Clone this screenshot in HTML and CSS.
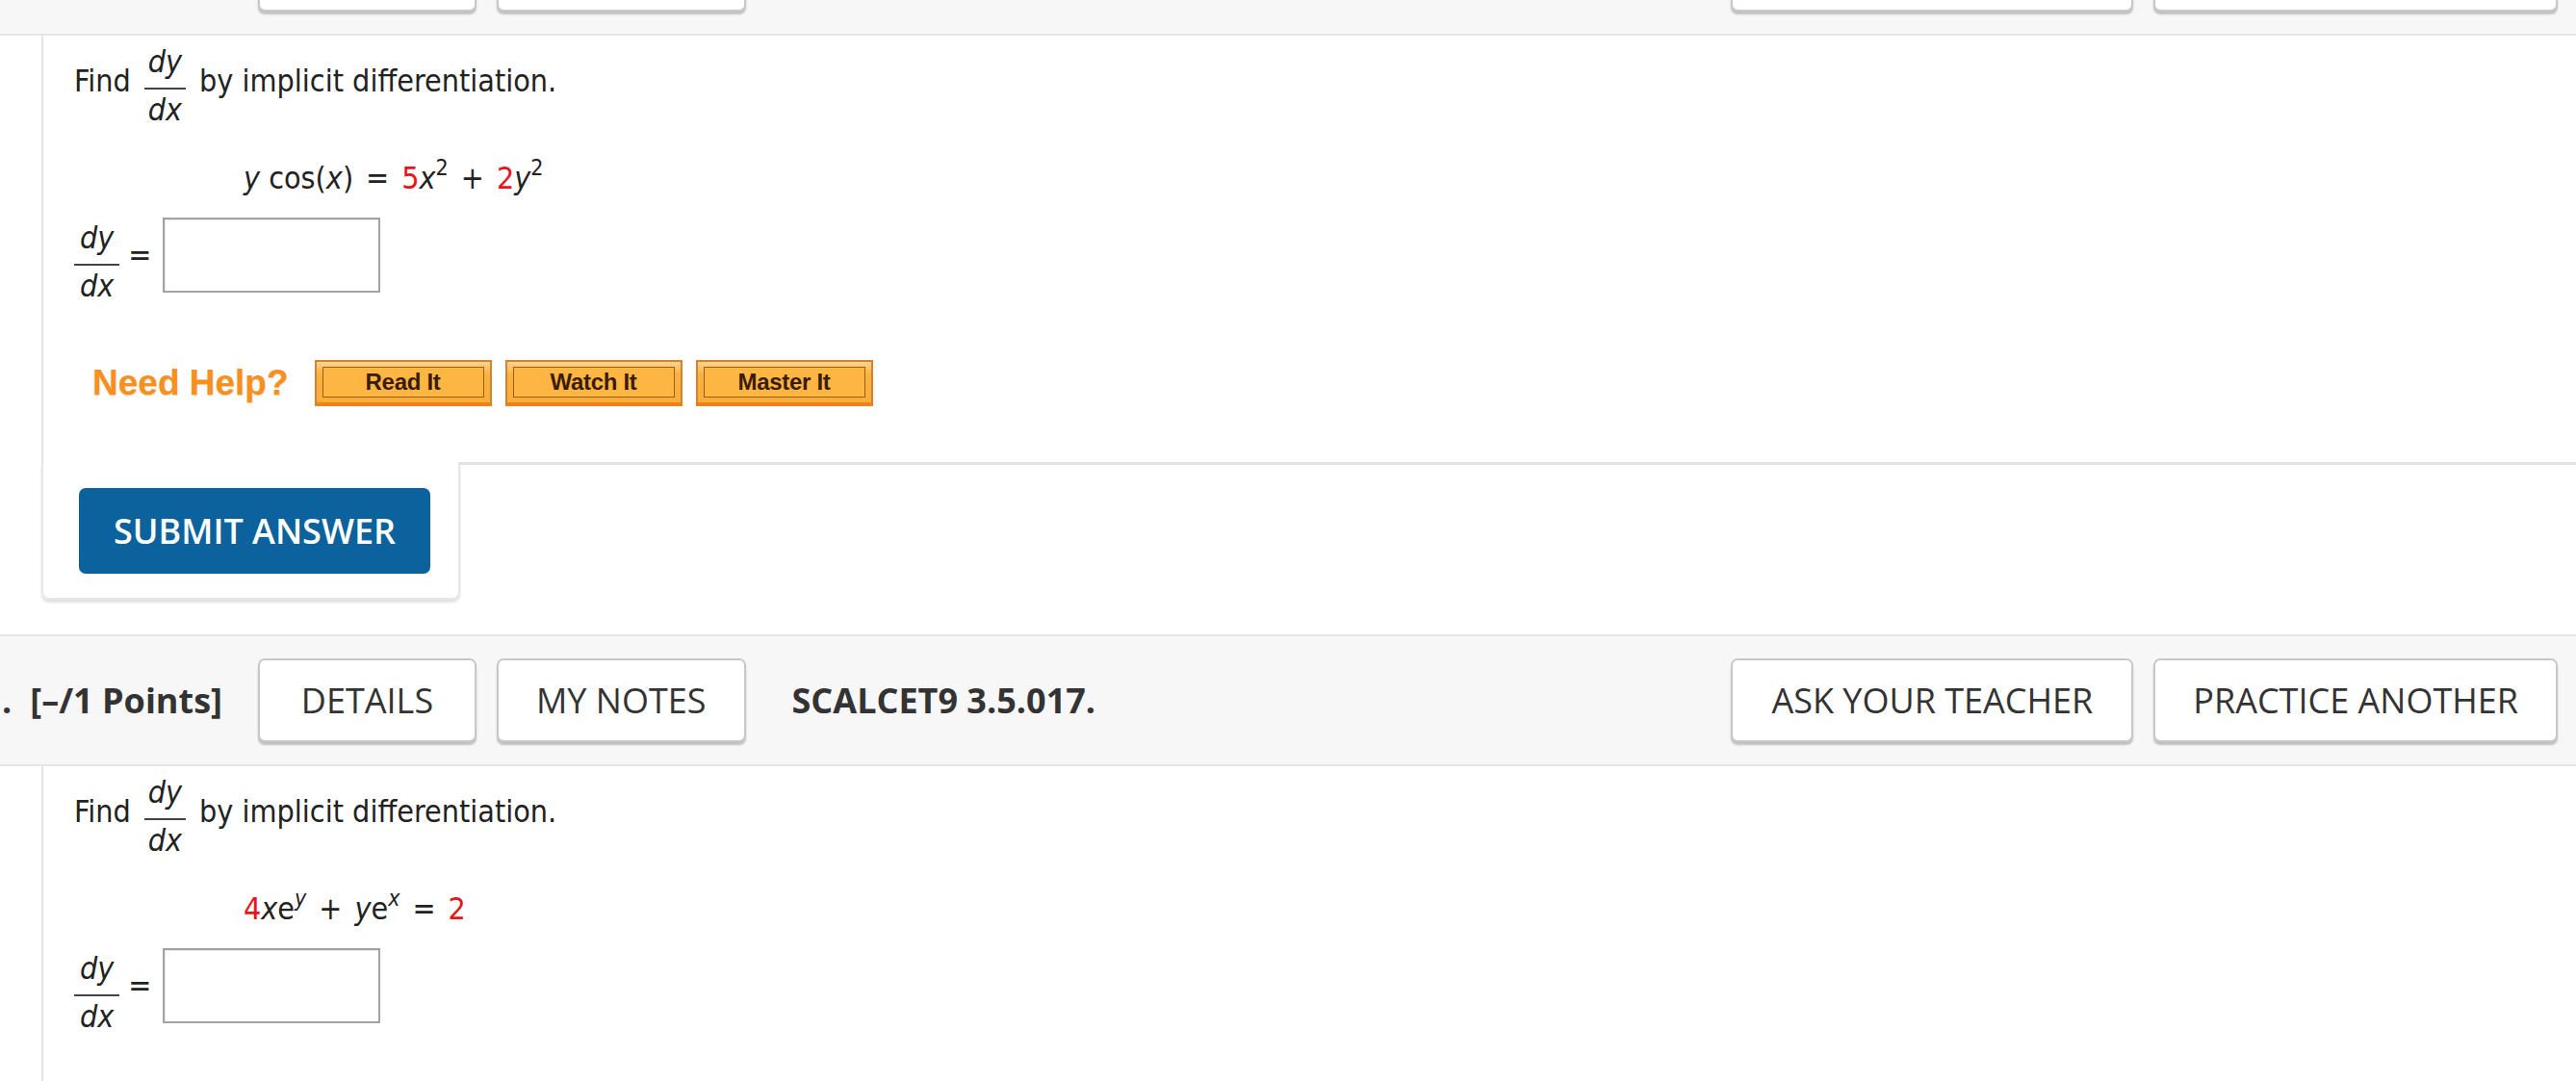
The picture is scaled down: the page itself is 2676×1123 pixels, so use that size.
FILE: index.html
```html
<!DOCTYPE html>
<html lang="en">
<head>
<meta charset="utf-8">
<title>Implicit differentiation</title>
<link rel="stylesheet" href="styles.css">
</head>
<body>
<header class="qhead qhead-top">
  <span class="qnum">.</span><span class="pts">[–/1 Points]</span>
  <span class="btn btn-first">DETAILS</span>
  <span class="btn btn-gap">MY NOTES</span>
  <span class="qid">SCALCET9 3.5.016.</span>
  <span class="btn btn-right">ASK YOUR TEACHER</span>
  <span class="btn btn-gap">PRACTICE ANOTHER</span>
</header>

<div class="qbody">
  <div class="qline">Find<span class="frac"><span class="num">dy</span><span class="den">dx</span></span>by implicit differentiation.</div>
  <div class="eq"><i>y</i> cos(<i>x</i>)<span class="op">=</span><span class="red">5</span><i>x</i><sup>2</sup><span class="op">+</span><span class="red">2</span><i>y</i><sup>2</sup></div>
  <div class="ans">
    <span class="frac frac2"><span class="num">dy</span><span class="den">dx</span></span>
    <span class="eqsign">=</span>
    <span class="input"></span>
  </div>
  <div class="help">
    <span class="help-label">Need Help?</span>
    <span class="hbtn"><span class="hbtn-in">Read It</span></span>
    <span class="hbtn"><span class="hbtn-in">Watch It</span></span>
    <span class="hbtn"><span class="hbtn-in">Master It</span></span>
  </div>
</div>
<div class="qfoot">
  <div class="tab"><span class="submit">SUBMIT ANSWER</span></div>
  <div class="rule"></div>
</div>

<header class="qhead">
  <span class="qnum">.</span><span class="pts">[–/1 Points]</span>
  <span class="btn btn-first">DETAILS</span>
  <span class="btn btn-gap">MY NOTES</span>
  <span class="qid">SCALCET9 3.5.017.</span>
  <span class="btn btn-right">ASK YOUR TEACHER</span>
  <span class="btn btn-gap">PRACTICE ANOTHER</span>
</header>

<div class="qbody">
  <div class="qline">Find<span class="frac"><span class="num">dy</span><span class="den">dx</span></span>by implicit differentiation.</div>
  <div class="eq"><span class="red">4</span><i>x</i>e<sup><i>y</i></sup><span class="op">+</span><i>y</i>e<sup><i>x</i></sup><span class="op">=</span><span class="red">2</span></div>
  <div class="ans">
    <span class="frac frac2"><span class="num">dy</span><span class="den">dx</span></span>
    <span class="eqsign">=</span>
    <span class="input"></span>
  </div>
  <div class="help">
    <span class="help-label">Need Help?</span>
    <span class="hbtn"><span class="hbtn-in">Read It</span></span>
    <span class="hbtn"><span class="hbtn-in">Watch It</span></span>
  </div>
</div>
</body>
</html>
```
FILE: styles.css
```css
html, body {
  margin: 0;
  padding: 0;
  background: #fff;
  height: 1123px;
  overflow: hidden;
}

/* question header bar */
.qhead {
  display: flex;
  align-items: center;
  height: 133px;
  background: #f7f7f7;
  border-top: 2px solid #e6e6e6;
  border-bottom: 2px solid #e6e6e6;
  font-family: "Open Sans", sans-serif;
  font-size: 36px;
  color: #333;
  padding-right: 19px;
}
.qhead-top {
  margin-top: -100px;
}
.qnum {
  font-weight: 700;
  margin-left: 2px;
}
.pts {
  font-weight: 700;
  margin-left: 19px;
}
.qid {
  font-weight: 700;
  margin-left: 48px;
}
.btn {
  display: flex;
  align-items: center;
  justify-content: center;
  box-sizing: border-box;
  height: 87px;
  min-width: 227px;
  padding: 0 39px;
  background: #fff;
  border: 2px solid #c8c8c8;
  border-radius: 7px;
  box-shadow: 0 3px 2px rgba(0, 0, 0, 0.22);
}
.btn-first { margin-left: 37px; }
.btn-gap { margin-left: 21px; }
.btn-right { margin-left: auto; padding: 0 40px; }

/* question body */
.qbody {
  margin-left: 43px;
  border-left: 2px solid #e4e4e4;
  padding: 11px 0 58px 32px;
  font-family: "DejaVu Sans Condensed", "DejaVu Sans", sans-serif;
  font-stretch: condensed;
  font-size: 32px;
  color: #222;
}
.qline {
  line-height: 38px;
}
.frac {
  display: inline-block;
  vertical-align: -30px;
  margin: 0 14px;
  text-align: center;
  font-style: italic;
}
.frac .num,
.frac .den {
  display: block;
  line-height: 32px;
  padding: 0 4px;
}
.frac .num {
  padding-bottom: 11px;
  border-bottom: 2px solid #444;
}
.frac .den {
  padding-top: 5px;
}
.eq {
  margin: 36px 0 0 176px;
  line-height: 38px;
}
.eq sup {
  font-size: 0.72em;
  line-height: 0;
  vertical-align: 0.62em;
}
.op {
  margin: 0 13px;
}
.red {
  color: #e8141c;
}
.ans {
  display: flex;
  align-items: flex-start;
  margin-top: 22px;
}
.frac2 {
  margin: 5px 0 0 0;
}
.frac2 .num,
.frac2 .den {
  padding-left: 6px;
  padding-right: 6px;
}
.eqsign {
  line-height: 78px;
  margin: 0 12px 0 9px;
}
.input {
  display: block;
  box-sizing: border-box;
  width: 226px;
  height: 78px;
  background: #fff;
  border: 2px solid #a3a3a3;
  box-shadow: inset 1px 1px 0 #e6e6e6;
}

/* need help */
.help {
  display: flex;
  align-items: center;
  height: 48px;
  margin-top: 61px;
  padding-left: 19px;
}
.help-label {
  font-family: "Liberation Sans", Arial, sans-serif;
  font-weight: 700;
  font-size: 37px;
  color: #f7901e;
  margin-right: 27px;
  text-shadow: 0 1px 1px rgba(200, 110, 20, 0.35);
}
.hbtn {
  display: flex;
  box-sizing: border-box;
  width: 184px;
  height: 48px;
  margin-right: 14px;
  padding: 5px 6px 5px;
  background: linear-gradient(#fdd48e, #fbb23e 30%, #fbad37);
  border: 2px solid #d08431;
  border-bottom: 4px solid #f0801c;
}
.hbtn-in {
  flex: 1;
  display: flex;
  align-items: center;
  justify-content: center;
  border: 1px solid #9a5e1c;
  background: #fdb543;
  font-family: "Liberation Sans", Arial, sans-serif;
  font-weight: 700;
  font-size: 24px;
  color: #3a1c02;
  letter-spacing: -0.3px;
}

/* submit tab */
.qfoot {
  display: flex;
  margin-bottom: 36px;
}
.tab {
  margin-left: 43px;
  padding: 27px 0 25px 37px;
  box-sizing: border-box;
  width: 435px;
  border: 2px solid #e6e6e6;
  border-top: 0;
  border-radius: 0 0 8px 8px;
  box-shadow: 0 3px 3px rgba(0, 0, 0, 0.12);
}
.submit {
  display: flex;
  align-items: center;
  justify-content: center;
  width: 365px;
  height: 89px;
  background: #0b629d;
  color: #fff;
  border-radius: 7px;
  font-family: "Open Sans", sans-serif;
  font-weight: 600;
  font-size: 36px;
}
.rule {
  flex: 1;
  align-self: flex-start;
  border-top: 3px solid #e2e2e2;
}
```
